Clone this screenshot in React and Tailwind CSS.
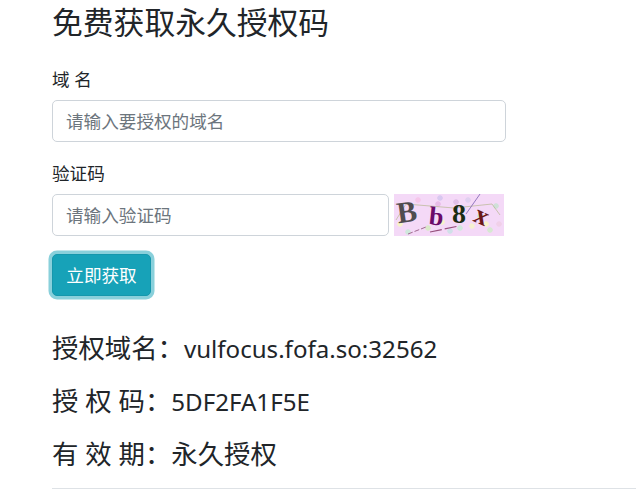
const CJK = "font-['Segoe_UI','Noto_Sans','Noto_Sans_CJK_SC',sans-serif]";

const Captcha = () => {
  const stars = [
    [6, 30, "#f7f3c8"], [14, 38, "#cfe8dc"], [24, 6, "#f5c6ea"], [34, 34, "#d9e8c8"], [44, 10, "#e8bce8"],
    [48, 28, "#f7f3c8"], [56, 37, "#cfe0e8"], [62, 8, "#e0c0e8"], [46, 4, "#d8c8f0"], [74, 6, "#e0d0f0"],
    [78, 32, "#f5f0d0"], [86, 22, "#cfe8dc"], [96, 36, "#d5e8d0"], [102, 12, "#cfe0d8"], [105, 30, "#f0d0e8"],
    [18, 22, "#f0d8f0"], [66, 34, "#cfe8dc"], [92, 30, "#f7f3c8"],
  ];

  return (
    <svg width="110" height="42" viewBox="0 0 110 42" className="ml-[5px] shrink-0">
      <rect width="110" height="42" fill="#f4d9f7" />
      {stars.map(([x, y, color], i) => (
        <path
          key={i}
          d={`M${x - 3} ${y}H${x + 3}M${x} ${y - 3}V${y + 3}M${x - 2} ${y - 2}L${x + 2} ${y + 2}M${x - 2} ${y + 2}L${x + 2} ${y - 2}`}
          stroke={color}
          strokeWidth="1.4"
        />
      ))}
      <path d="M14 40L32 33" stroke="#a06a90" strokeWidth="1" strokeDasharray="5 2" />
      <path d="M36 38L65 32" stroke="#96507c" strokeWidth="1.2" strokeDasharray="12 3" />
      <path d="M2 26L12 10L60 14L98 10L106 21" stroke="#b8b890" strokeWidth="0.7" fill="none" />
      <path d="M72 20L86 0" stroke="#7a60b0" strokeWidth="0.8" />
      <text x="3" y="28" fontFamily="'Liberation Serif', serif" fontWeight="700" fontSize="30" fill="#504c50" transform="rotate(-8 12 20)">B</text>
      <text x="35" y="31" fontFamily="'Liberation Serif', serif" fontWeight="700" fontSize="26" fill="#6a0a6a" transform="rotate(6 41 24)">b</text>
      <text x="58" y="29" fontFamily="'Liberation Serif', serif" fontWeight="700" fontSize="28" fill="#1c2c14">8</text>
      <text x="80" y="30" fontFamily="'Liberation Serif', serif" fontWeight="700" fontSize="27" fill="#6a1818" transform="rotate(24 87 24)">x</text>
    </svg>
  );
};

export default function App() {
  return (
    <div className={`${CJK} bg-white h-[503px] overflow-hidden pl-[52px] text-[#212529]`}>
      <h3 className="text-[30.8px] leading-[44px] font-normal">免费获取永久授权码</h3>

      <div className="mt-[23px] w-[454px]">
        <label className="block text-[17.6px] leading-6">域 名</label>
        <input
          placeholder="请输入要授权的域名"
          className="mt-[9px] block w-full h-[42px] px-[13px] text-[17.6px] bg-white border border-[#ced4da] rounded-[5px] placeholder:text-[#6c757d]"
        />

        <label className="block mt-[19px] text-[17.6px] leading-6">验证码</label>
        <div className="mt-[9px] flex items-center">
          <input
            placeholder="请输入验证码"
            className="block w-[337px] h-[42px] px-[13px] text-[17.6px] bg-white border border-[#ced4da] rounded-[5px] placeholder:text-[#6c757d]"
          />
          <Captcha />
        </div>

        <button className="mt-[18px] block w-[99px] h-[42px] text-[17.6px] text-white bg-[#17a2b8] border border-[#1597ac] rounded-[5px] shadow-[0_0_0_3.5px_rgba(58,176,195,0.6)]">
          立即获取
        </button>
      </div>

      <div className="mt-[32px] text-[26.4px] leading-[40px]">
        <p>授权域名：<span className="text-[24.1px]">vulfocus.fofa.so:32562</span></p>
        <p className="mt-[12px]">授 权 码：<span className="text-[24.1px]">5DF2FA1F5E</span></p>
        <p className="mt-[12px]">有 效 期：永久授权</p>
      </div>

      <hr className="mt-[14px] border-t border-[#dee2e6]" />
    </div>
  );
}
